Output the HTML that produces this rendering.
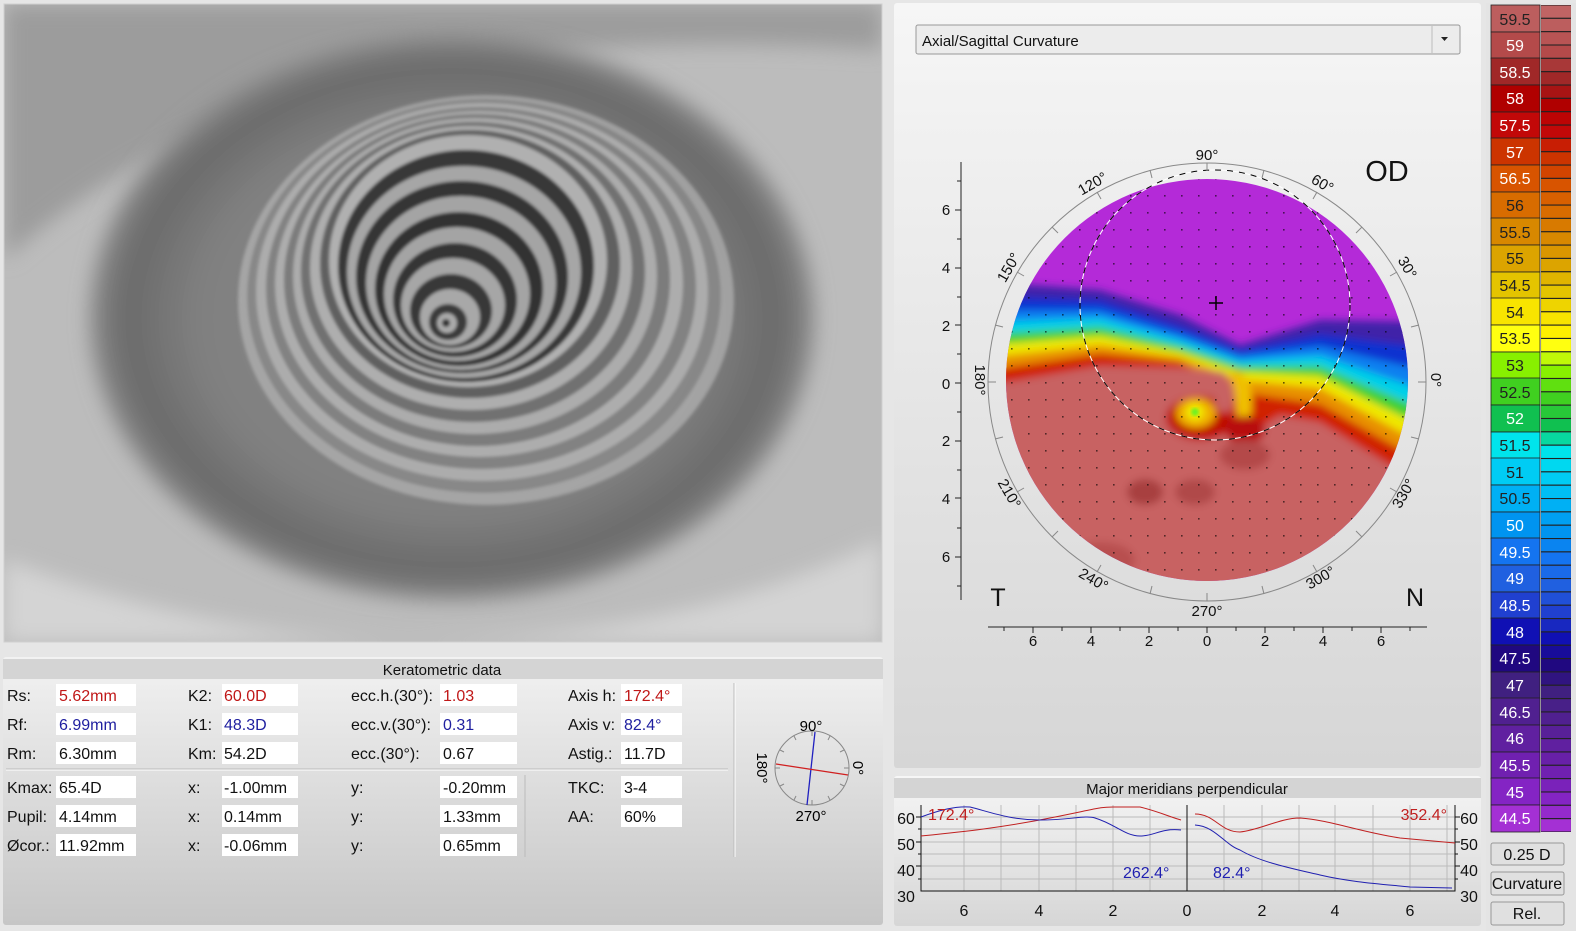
<!DOCTYPE html>
<html><head><meta charset="utf-8"><style>
html,body{margin:0;padding:0;background:#e4e4e4;width:1576px;height:931px;overflow:hidden}
svg{display:block;font-family:"Liberation Sans",sans-serif}
</style></head><body>
<svg width="1576" height="931" viewBox="0 0 1576 931" xmlns="http://www.w3.org/2000/svg">
<defs>
<linearGradient id="pg" x1="0" y1="0" x2="0" y2="1"><stop offset="0" stop-color="#f6f6f6"/><stop offset="1" stop-color="#d6d6d6"/></linearGradient>
<linearGradient id="dg" x1="0" y1="0" x2="0" y2="1"><stop offset="0" stop-color="#f2f2f2"/><stop offset="1" stop-color="#c6c6c6"/></linearGradient>
<radialGradient id="eyebg" cx="0.5" cy="0.5" r="0.5"><stop offset="0" stop-color="#8a8a8a"/><stop offset="0.7" stop-color="#808080"/><stop offset="0.9" stop-color="#6a6a6a"/><stop offset="1" stop-color="#8a8a8a"/></radialGradient>
<clipPath id="eyec"><rect x="4" y="4" width="878" height="638"/></clipPath>
<clipPath id="mapc"><circle cx="1207" cy="380" r="201"/></clipPath>
<filter id="bl" x="-10%" y="-10%" width="120%" height="120%"><feGaussianBlur stdDeviation="4"/></filter>
<filter id="bl2" x="-20%" y="-20%" width="140%" height="140%"><feGaussianBlur stdDeviation="10"/></filter>
<filter id="bl3"><feGaussianBlur stdDeviation="1.5"/></filter>
<pattern id="dots" x="0" y="0" width="17" height="17" patternUnits="userSpaceOnUse"><rect x="8" y="8" width="1.6" height="1.6" fill="#000"/></pattern>
</defs>
<rect width="1576" height="931" fill="#e6e6e6"/>

<!-- EYE -->
<g clip-path="url(#eyec)">
<rect x="4" y="4" width="878" height="638" fill="#bcbcbc"/>
<path d="M4 4 H882 V50 Q600 30 350 80 Q150 130 4 260 Z" fill="#9c9c9c" filter="url(#bl2)"/>
<path d="M4 560 Q250 650 450 640 Q700 630 882 540 V642 H4Z" fill="#d4d4d4" filter="url(#bl2)"/>
<ellipse cx="452" cy="318" rx="362" ry="282" fill="url(#eyebg)" filter="url(#bl2)"/>
<g filter="url(#bl3)">
<ellipse cx="486" cy="300" rx="248" ry="205" fill="#c2c2c2" opacity="0.55"/>
<ellipse cx="484" cy="296" rx="237" ry="197" fill="#7a7a7a" opacity="0.7"/>
<ellipse cx="482" cy="292" rx="226" ry="189" fill="#c4c4c4" opacity="0.6"/>
<ellipse cx="481" cy="288" rx="215" ry="181" fill="#747474" opacity="0.75"/>
<ellipse cx="479" cy="284" rx="204" ry="173" fill="#c4c4c4" opacity="0.65"/>
<ellipse cx="477" cy="280" rx="193" ry="166" fill="#6e6e6e" opacity="0.8"/>
<ellipse cx="475" cy="276" rx="182" ry="158" fill="#c2c2c2" opacity="0.7"/>
<ellipse cx="473" cy="272" rx="172" ry="150" fill="#666" opacity="0.85"/>
<ellipse cx="471" cy="268" rx="161" ry="142" fill="#bebebe" opacity="0.8"/>
<ellipse cx="470" cy="264" rx="150" ry="134" fill="#585858" opacity="0.9"/>
<ellipse cx="468" cy="261" rx="139" ry="126" fill="#b0b0b0"/>
<ellipse cx="466" cy="266" rx="128" ry="116" fill="#383838"/>
<ellipse cx="464" cy="272" rx="117" ry="106" fill="#a6a6a6"/>
<ellipse cx="462" cy="277" rx="106" ry="96" fill="#353535"/>
<ellipse cx="461" cy="283" rx="95" ry="87" fill="#a4a4a4"/>
<ellipse cx="459" cy="289" rx="84" ry="77" fill="#333"/>
<ellipse cx="457" cy="294" rx="73" ry="67" fill="#a4a4a4"/>
<ellipse cx="455" cy="300" rx="62" ry="57" fill="#353535"/>
<ellipse cx="453" cy="305" rx="52" ry="47" fill="#a6a6a6"/>
<ellipse cx="451" cy="311" rx="41" ry="37" fill="#383838"/>
<ellipse cx="450" cy="317" rx="30" ry="28" fill="#a8a8a8"/>
<ellipse cx="448" cy="322" rx="19" ry="18" fill="#3a3a3a"/>
<ellipse cx="447" cy="323" rx="10" ry="10" fill="#aaa"/>
<ellipse cx="446" cy="323" rx="4" ry="4" fill="#333"/>
</g>
</g>
<rect x="4" y="4" width="878" height="638" fill="none" stroke="#d0d0d0"/>

<!-- KERATOMETRIC PANEL -->
<rect x="3" y="657" width="880" height="268" fill="url(#dg)" rx="3"/>
<rect x="3" y="659" width="880" height="20" fill="#d4d4d4"/>
<text x="442" y="675" font-size="15" text-anchor="middle" fill="#111">Keratometric data</text>
<g font-size="16" fill="#111">
<g fill="#fff">
<rect x="56" y="684" width="80" height="22"/><rect x="56" y="713" width="80" height="22"/><rect x="56" y="742" width="80" height="22"/>
<rect x="56" y="776" width="80" height="22"/><rect x="56" y="805" width="80" height="22"/><rect x="56" y="834" width="80" height="22"/>
<rect x="222" y="684" width="76" height="22"/><rect x="222" y="713" width="76" height="22"/><rect x="222" y="742" width="76" height="22"/>
<rect x="222" y="776" width="76" height="22"/><rect x="222" y="805" width="76" height="22"/><rect x="222" y="834" width="76" height="22"/>
<rect x="440" y="684" width="77" height="22"/><rect x="440" y="713" width="77" height="22"/><rect x="440" y="742" width="77" height="22"/>
<rect x="440" y="776" width="77" height="22"/><rect x="440" y="805" width="77" height="22"/><rect x="440" y="834" width="77" height="22"/>
<rect x="621" y="684" width="61" height="22"/><rect x="621" y="713" width="61" height="22"/><rect x="621" y="742" width="61" height="22"/>
<rect x="621" y="776" width="61" height="22"/><rect x="621" y="805" width="61" height="22"/>
</g>
<text x="7" y="701">Rs:</text><text x="59" y="701" fill="#c01818">5.62mm</text>
<text x="7" y="730">Rf:</text><text x="59" y="730" fill="#2020a0">6.99mm</text>
<text x="7" y="759">Rm:</text><text x="59" y="759">6.30mm</text>
<text x="7" y="793">Kmax:</text><text x="59" y="793">65.4D</text>
<text x="7" y="822">Pupil:</text><text x="59" y="822">4.14mm</text>
<text x="7" y="851">Øcor.:</text><text x="59" y="851">11.92mm</text>
<text x="188" y="701">K2:</text><text x="224" y="701" fill="#c01818">60.0D</text>
<text x="188" y="730">K1:</text><text x="224" y="730" fill="#2020a0">48.3D</text>
<text x="188" y="759">Km:</text><text x="224" y="759">54.2D</text>
<text x="188" y="793">x:</text><text x="224" y="793">-1.00mm</text>
<text x="188" y="822">x:</text><text x="224" y="822">0.14mm</text>
<text x="188" y="851">x:</text><text x="224" y="851">-0.06mm</text>
<text x="351" y="701">ecc.h.(30°):</text><text x="443" y="701" fill="#c01818">1.03</text>
<text x="351" y="730">ecc.v.(30°):</text><text x="443" y="730" fill="#2020a0">0.31</text>
<text x="351" y="759">ecc.(30°):</text><text x="443" y="759">0.67</text>
<text x="351" y="793">y:</text><text x="443" y="793">-0.20mm</text>
<text x="351" y="822">y:</text><text x="443" y="822">1.33mm</text>
<text x="351" y="851">y:</text><text x="443" y="851">0.65mm</text>
<text x="568" y="701">Axis h:</text><text x="624" y="701" fill="#c01818">172.4°</text>
<text x="568" y="730">Axis v:</text><text x="624" y="730" fill="#2020a0">82.4°</text>
<text x="568" y="759">Astig.:</text><text x="624" y="759">11.7D</text>
<text x="568" y="793">TKC:</text><text x="624" y="793">3-4</text>
<text x="568" y="822">AA:</text><text x="624" y="822">60%</text>
</g>
<line x1="6" y1="769" x2="728" y2="769" stroke="#bbb"/><line x1="6" y1="770" x2="728" y2="770" stroke="#fff"/>
<line x1="525" y1="775" x2="525" y2="857" stroke="#bbb"/>
<line x1="734" y1="683" x2="734" y2="857" stroke="#bbb"/><line x1="735" y1="683" x2="735" y2="857" stroke="#fff"/>
<!-- compass -->
<circle cx="812" cy="768" r="37" fill="none" stroke="#888"/>
<g stroke="#888">
<line x1="812" y1="731" x2="812" y2="736"/><line x1="812" y1="805" x2="812" y2="800"/>
<line x1="775" y1="768" x2="780" y2="768"/><line x1="849" y1="768" x2="844" y2="768"/>
<line x1="830" y1="736" x2="828" y2="740"/><line x1="844" y1="750" x2="840" y2="752"/>
<line x1="794" y1="736" x2="796" y2="740"/><line x1="780" y1="750" x2="784" y2="752"/>
<line x1="830" y1="800" x2="828" y2="796"/><line x1="844" y1="786" x2="840" y2="784"/>
<line x1="794" y1="800" x2="796" y2="796"/><line x1="780" y1="786" x2="784" y2="784"/>
</g>
<line x1="815" y1="732" x2="807" y2="805" stroke="#2020c0" stroke-width="1.3"/>
<line x1="776" y1="764" x2="848" y2="775" stroke="#d02020" stroke-width="1.3"/>
<text x="811" y="731" font-size="15" text-anchor="middle">90°</text>
<text x="811" y="821" font-size="15" text-anchor="middle">270°</text>
<text transform="translate(757,768) rotate(90)" font-size="15" text-anchor="middle">180°</text>
<text transform="translate(853,768) rotate(90)" font-size="15" text-anchor="middle">0°</text>

<!-- MAP PANEL -->
<rect x="894" y="3" width="587" height="765" fill="url(#pg)" rx="3"/>
<rect x="916" y="25" width="544" height="29" fill="#ececec" stroke="#999" rx="2"/>
<line x1="1432" y1="26" x2="1432" y2="53" stroke="#bbb"/>
<path d="M1441 37 h7 l-3.5 4z" fill="#222"/>
<text x="922" y="46" font-size="15" fill="#111">Axial/Sagittal Curvature</text>

<!-- map -->
<g clip-path="url(#mapc)">
<rect x="990" y="170" width="440" height="420" fill="#b42ad8"/>
<g filter="url(#bl)">
<path d="M990 282 L1100 290 L1180 315 L1240 345 L1320 320 L1430 322 V600 H990Z" fill="#4020a8"/>
<path d="M990 296 L1100 300 L1180 326 L1240 350 L1320 334 L1430 348 V600 H990Z" fill="#1030d0"/>
<path d="M990 310 L1100 310 L1180 334 L1240 356 L1320 346 L1430 372 V600 H990Z" fill="#1080f0"/>
<path d="M990 322 L1100 318 L1180 340 L1240 361 L1320 356 L1430 392 V600 H990Z" fill="#00d0e8"/>
<path d="M990 334 L1100 327 L1180 346 L1240 366 L1320 366 L1430 412 V600 H990Z" fill="#40d030"/>
<path d="M990 345 L1100 336 L1180 352 L1240 372 L1320 376 L1430 430 V600 H990Z" fill="#f0e800"/>
<path d="M990 357 L1100 345 L1180 357 L1240 380 L1320 388 L1430 448 V600 H990Z" fill="#e89000"/>
<path d="M990 370 L1100 354 L1180 362 L1240 392 L1320 404 L1430 466 V600 H990Z" fill="#d02000"/>
<path d="M990 385 L1100 366 L1180 368 L1225 372 L1240 440 L1280 415 L1320 422 L1430 490 V600 H990Z" fill="#c86262"/>
<path d="M1232 370 Q1250 370 1252 400 L1250 440 L1240 440Z" fill="#f0c000"/>
<ellipse cx="1200" cy="418" rx="34" ry="22" fill="#c01000"/>
<ellipse cx="1196" cy="413" rx="20" ry="15" fill="#f0b000"/>
<ellipse cx="1195" cy="412" rx="9" ry="8" fill="#f0f000"/>
<ellipse cx="1224" cy="395" rx="10" ry="18" fill="#c86262"/>
<ellipse cx="1245" cy="430" rx="20" ry="14" fill="#b81010"/>
<ellipse cx="1145" cy="492" rx="18" ry="13" fill="#a84040"/>
<ellipse cx="1195" cy="492" rx="20" ry="13" fill="#b04848"/>
<ellipse cx="1245" cy="455" rx="25" ry="15" fill="#b44848"/>
<ellipse cx="1100" cy="560" rx="35" ry="18" fill="#b85050"/>
</g>
<ellipse cx="1195" cy="412" rx="4" ry="4" fill="#70f020" filter="url(#bl3)"/>
<rect x="990" y="170" width="440" height="420" fill="url(#dots)" opacity="0.6"/>
</g>
<circle cx="1215" cy="305" r="135" fill="none" stroke="#fff" stroke-width="1"/>
<circle cx="1215" cy="305" r="135" fill="none" stroke="#000" stroke-width="1" stroke-dasharray="6 6"/>
<path d="M1209 303 h14 M1216 296 v14" stroke="#000" stroke-width="1.5"/>
<!-- ring -->
<circle cx="1207" cy="382" r="219" fill="none" stroke="#888"/>
<g stroke="#888">
<line x1="1207" y1="163" x2="1207" y2="171"/><line x1="1207" y1="601" x2="1207" y2="593"/>
<line x1="988" y1="382" x2="996" y2="382"/><line x1="1426" y1="382" x2="1418" y2="382"/>
<line x1="1317" y1="192" x2="1313" y2="199"/><line x1="1097" y1="192" x2="1101" y2="199"/>
<line x1="1397" y1="272" x2="1390" y2="276"/><line x1="1017" y1="272" x2="1024" y2="276"/>
<line x1="1397" y1="492" x2="1390" y2="488"/><line x1="1017" y1="492" x2="1024" y2="488"/>
<line x1="1317" y1="572" x2="1313" y2="565"/><line x1="1097" y1="572" x2="1101" y2="565"/>
<line x1="1264" y1="170" x2="1262" y2="178"/><line x1="1150" y1="170" x2="1152" y2="178"/>
<line x1="1362" y1="227" x2="1356" y2="233"/><line x1="1052" y1="227" x2="1058" y2="233"/>
<line x1="1419" y1="325" x2="1411" y2="327"/><line x1="995" y1="325" x2="1003" y2="327"/>
<line x1="1419" y1="439" x2="1411" y2="437"/><line x1="995" y1="439" x2="1003" y2="437"/>
<line x1="1362" y1="537" x2="1356" y2="531"/><line x1="1052" y1="537" x2="1058" y2="531"/>
<line x1="1264" y1="594" x2="1262" y2="586"/><line x1="1150" y1="594" x2="1152" y2="586"/>
</g>
<g font-size="15" fill="#111" text-anchor="middle">
<text x="1207" y="160">90°</text>
<text transform="translate(1320,188) rotate(30)">60°</text>
<text transform="translate(1403,270) rotate(60)">30°</text>
<text transform="translate(1431,380) rotate(90)">0°</text>
<text transform="translate(1408,496) rotate(-60)">330°</text>
<text transform="translate(1323,582) rotate(-30)">300°</text>
<text x="1207" y="616">270°</text>
<text transform="translate(1091,584) rotate(30)">240°</text>
<text transform="translate(1005,496) rotate(60)">210°</text>
<text transform="translate(975,380) rotate(90)">180°</text>
<text transform="translate(1013,270) rotate(-60)">150°</text>
<text transform="translate(1095,188) rotate(-30)">120°</text>
</g>
<text x="1387" y="181" font-size="29" text-anchor="middle" fill="#111">OD</text>
<text x="998" y="606" font-size="25" text-anchor="middle" fill="#111">T</text>
<text x="1415" y="606" font-size="25" text-anchor="middle" fill="#111">N</text>
<g stroke="#222">
<line x1="961" y1="162" x2="961" y2="600"/>
<line x1="988" y1="627" x2="1427" y2="627"/>
<path d="M955 210h6M955 268h6M955 325h6M955 383h6M955 441h6M955 498h6M955 557h6M957 181h4M957 239h4M957 297h4M957 354h4M957 412h4M957 470h4M957 528h4M957 586h4"/>
<path d="M1033 627v6M1091 627v6M1149 627v6M1207 627v6M1265 627v6M1323 627v6M1381 627v6M1004 627v4M1062 627v4M1120 627v4M1178 627v4M1236 627v4M1294 627v4M1352 627v4M1410 627v4"/>
</g>
<g font-size="15" fill="#111" text-anchor="middle">
<text x="946" y="215">6</text><text x="946" y="273">4</text><text x="946" y="331">2</text><text x="946" y="389">0</text><text x="946" y="446">2</text><text x="946" y="504">4</text><text x="946" y="562">6</text>
<text x="1033" y="646">6</text><text x="1091" y="646">4</text><text x="1149" y="646">2</text><text x="1207" y="646">0</text><text x="1265" y="646">2</text><text x="1323" y="646">4</text><text x="1381" y="646">6</text>
</g>

<!-- GRAPH PANEL -->
<rect x="894" y="776" width="587" height="150" fill="url(#pg)" rx="3"/>
<rect x="894" y="778" width="587" height="20" fill="#d4d4d4"/>
<text x="1187" y="794" font-size="15" text-anchor="middle" fill="#111">Major meridians perpendicular</text>
<g stroke="#bbb" stroke-width="1">
<path d="M921 817H1455M921 842H1455M921 866H1455M921 829H1455M921 854H1455M921 879H1455"/>
<path d="M964 805V891M1001 805V891M1039 805V891M1076 805V891M1113 805V891M1150 805V891M1224 805V891M1262 805V891M1299 805V891M1335 805V891M1373 805V891M1410 805V891M1447 805V891"/>
</g>
<g stroke="#111" fill="none">
<path d="M921 805V891H1455V805"/><line x1="1187" y1="805" x2="1187" y2="891"/>
<path d="M916 817h5M916 842h5M916 866h5M918 829h3M918 854h3M918 879h3M1455 817h5M1455 842h5M1455 866h5M1455 829h3M1455 854h3M1455 879h3"/>
</g>
<path d="M921 836 C960 832 1000 828 1050 818 S1100 807 1113 807 L1140 807 C1160 812 1170 817 1181 820" stroke="#c02020" fill="none"/>
<path d="M921 817 C940 810 955 806 970 807 C990 812 1010 820 1040 820 S1085 815 1095 818 C1115 824 1125 836 1140 836 C1155 836 1160 828 1181 830" stroke="#2020b0" fill="none"/>
<path d="M1195 814 C1215 814 1220 832 1240 832 C1260 830 1280 818 1300 818 C1330 820 1360 832 1400 838 L1455 843" stroke="#c02020" fill="none"/>
<path d="M1195 825 C1215 826 1225 845 1240 850 C1260 862 1290 868 1320 875 C1350 882 1380 884 1410 887 L1452 888" stroke="#2020b0" fill="none"/>
<g font-size="16" text-anchor="middle" fill="#111">
<text x="906" y="824">60</text><text x="906" y="850">50</text><text x="906" y="876">40</text><text x="906" y="902">30</text>
<text x="1469" y="824">60</text><text x="1469" y="850">50</text><text x="1469" y="876">40</text><text x="1469" y="902">30</text>
<text x="964" y="916">6</text><text x="1039" y="916">4</text><text x="1113" y="916">2</text><text x="1187" y="916">0</text><text x="1262" y="916">2</text><text x="1335" y="916">4</text><text x="1410" y="916">6</text>
</g>
<g font-size="16">
<text x="928" y="820" fill="#c02020">172.4°</text>
<text x="1447" y="820" fill="#c02020" text-anchor="end">352.4°</text>
<text x="1123" y="878" fill="#2020b0">262.4°</text>
<text x="1213" y="878" fill="#2020b0">82.4°</text>
</g>

<!-- COLOR SCALE -->
<rect x="1486" y="3" width="90" height="928" fill="#e4e4e4"/>
<g stroke="#222" stroke-width="0.8" font-size="16" text-anchor="middle">
<rect x="1491" y="5" width="49" height="27" fill="#bc5e5e"/><text x="1515" y="25" fill="#222" stroke="none">59.5</text>
<rect x="1491" y="32" width="49" height="27" fill="#b44a4a"/><text x="1515" y="51" fill="#fff" stroke="none">59</text>
<rect x="1491" y="58" width="49" height="27" fill="#a02828"/><text x="1515" y="78" fill="#fff" stroke="none">58.5</text>
<rect x="1491" y="85" width="49" height="27" fill="#b00000"/><text x="1515" y="104" fill="#fff" stroke="none">58</text>
<rect x="1491" y="112" width="49" height="27" fill="#c20808"/><text x="1515" y="131" fill="#fff" stroke="none">57.5</text>
<rect x="1491" y="138" width="49" height="27" fill="#cc3400"/><text x="1515" y="158" fill="#fff" stroke="none">57</text>
<rect x="1491" y="165" width="49" height="27" fill="#d85400"/><text x="1515" y="184" fill="#fff" stroke="none">56.5</text>
<rect x="1491" y="192" width="49" height="27" fill="#d86c00"/><text x="1515" y="211" fill="#222" stroke="none">56</text>
<rect x="1491" y="218" width="49" height="27" fill="#d88800"/><text x="1515" y="238" fill="#222" stroke="none">55.5</text>
<rect x="1491" y="245" width="49" height="27" fill="#dca400"/><text x="1515" y="264" fill="#222" stroke="none">55</text>
<rect x="1491" y="272" width="49" height="27" fill="#e4c400"/><text x="1515" y="291" fill="#222" stroke="none">54.5</text>
<rect x="1491" y="298" width="49" height="27" fill="#f8e400"/><text x="1515" y="318" fill="#222" stroke="none">54</text>
<rect x="1491" y="325" width="49" height="27" fill="#ffff10"/><text x="1515" y="344" fill="#222" stroke="none">53.5</text>
<rect x="1491" y="352" width="49" height="27" fill="#88f000"/><text x="1515" y="371" fill="#222" stroke="none">53</text>
<rect x="1491" y="378" width="49" height="27" fill="#40d020"/><text x="1515" y="398" fill="#222" stroke="none">52.5</text>
<rect x="1491" y="405" width="49" height="27" fill="#10c050"/><text x="1515" y="424" fill="#fff" stroke="none">52</text>
<rect x="1491" y="432" width="49" height="27" fill="#00e4ec"/><text x="1515" y="451" fill="#222" stroke="none">51.5</text>
<rect x="1491" y="458" width="49" height="27" fill="#00ccf4"/><text x="1515" y="478" fill="#222" stroke="none">51</text>
<rect x="1491" y="485" width="49" height="27" fill="#00b0f4"/><text x="1515" y="504" fill="#222" stroke="none">50.5</text>
<rect x="1491" y="512" width="49" height="27" fill="#0094f0"/><text x="1515" y="531" fill="#fff" stroke="none">50</text>
<rect x="1491" y="538" width="49" height="27" fill="#1474f0"/><text x="1515" y="558" fill="#fff" stroke="none">49.5</text>
<rect x="1491" y="565" width="49" height="27" fill="#2060e0"/><text x="1515" y="584" fill="#fff" stroke="none">49</text>
<rect x="1491" y="592" width="49" height="27" fill="#2040d0"/><text x="1515" y="611" fill="#fff" stroke="none">48.5</text>
<rect x="1491" y="618" width="49" height="27" fill="#1010b4"/><text x="1515" y="638" fill="#fff" stroke="none">48</text>
<rect x="1491" y="645" width="49" height="27" fill="#200880"/><text x="1515" y="664" fill="#fff" stroke="none">47.5</text>
<rect x="1491" y="672" width="49" height="27" fill="#402080"/><text x="1515" y="691" fill="#fff" stroke="none">47</text>
<rect x="1491" y="698" width="49" height="27" fill="#502090"/><text x="1515" y="718" fill="#fff" stroke="none">46.5</text>
<rect x="1491" y="725" width="49" height="27" fill="#6020a0"/><text x="1515" y="744" fill="#fff" stroke="none">46</text>
<rect x="1491" y="752" width="49" height="27" fill="#7020b0"/><text x="1515" y="771" fill="#fff" stroke="none">45.5</text>
<rect x="1491" y="778" width="49" height="27" fill="#8424c4"/><text x="1515" y="798" fill="#fff" stroke="none">45</text>
<rect x="1491" y="805" width="49" height="27" fill="#a430d4"/><text x="1515" y="824" fill="#fff" stroke="none">44.5</text>
</g>
<svg x="1541" y="5" width="30" height="827" viewBox="0 0 30 62" preserveAspectRatio="none">
<g stroke="#222" stroke-width="0.08">
<rect y="0" width="30" height="1" fill="#c06464"/><rect y="1" width="30" height="1" fill="#bc5e5e"/><rect y="2" width="30" height="1" fill="#b85454"/><rect y="3" width="30" height="1" fill="#b44a4a"/>
<rect y="4" width="30" height="1" fill="#a83838"/><rect y="5" width="30" height="1" fill="#a02828"/><rect y="6" width="30" height="1" fill="#a81414"/><rect y="7" width="30" height="1" fill="#b00000"/>
<rect y="8" width="30" height="1" fill="#bc0404"/><rect y="9" width="30" height="1" fill="#c20808"/><rect y="10" width="30" height="1" fill="#c81e04"/><rect y="11" width="30" height="1" fill="#cc3400"/>
<rect y="12" width="30" height="1" fill="#d24400"/><rect y="13" width="30" height="1" fill="#d85400"/><rect y="14" width="30" height="1" fill="#d86000"/><rect y="15" width="30" height="1" fill="#d86c00"/>
<rect y="16" width="30" height="1" fill="#d87a00"/><rect y="17" width="30" height="1" fill="#d88800"/><rect y="18" width="30" height="1" fill="#da9600"/><rect y="19" width="30" height="1" fill="#dca400"/>
<rect y="20" width="30" height="1" fill="#e0b400"/><rect y="21" width="30" height="1" fill="#e4c400"/><rect y="22" width="30" height="1" fill="#eed400"/><rect y="23" width="30" height="1" fill="#f8e400"/>
<rect y="24" width="30" height="1" fill="#fff000"/><rect y="25" width="30" height="1" fill="#ffff10"/><rect y="26" width="30" height="1" fill="#c0f808"/><rect y="27" width="30" height="1" fill="#88f000"/>
<rect y="28" width="30" height="1" fill="#60e010"/><rect y="29" width="30" height="1" fill="#40d020"/><rect y="30" width="30" height="1" fill="#28c838"/><rect y="31" width="30" height="1" fill="#10c050"/>
<rect y="32" width="30" height="1" fill="#08d8a0"/><rect y="33" width="30" height="1" fill="#00e4ec"/><rect y="34" width="30" height="1" fill="#00d8f0"/><rect y="35" width="30" height="1" fill="#00ccf4"/>
<rect y="36" width="30" height="1" fill="#00bef4"/><rect y="37" width="30" height="1" fill="#00b0f4"/><rect y="38" width="30" height="1" fill="#00a0f2"/><rect y="39" width="30" height="1" fill="#0094f0"/>
<rect y="40" width="30" height="1" fill="#0a84f0"/><rect y="41" width="30" height="1" fill="#1474f0"/><rect y="42" width="30" height="1" fill="#1a6ae8"/><rect y="43" width="30" height="1" fill="#2060e0"/>
<rect y="44" width="30" height="1" fill="#2050d8"/><rect y="45" width="30" height="1" fill="#2040d0"/><rect y="46" width="30" height="1" fill="#1828c0"/><rect y="47" width="30" height="1" fill="#1010b4"/>
<rect y="48" width="30" height="1" fill="#180c9a"/><rect y="49" width="30" height="1" fill="#200880"/><rect y="50" width="30" height="1" fill="#301480"/><rect y="51" width="30" height="1" fill="#402080"/>
<rect y="52" width="30" height="1" fill="#482088"/><rect y="53" width="30" height="1" fill="#502090"/><rect y="54" width="30" height="1" fill="#582098"/><rect y="55" width="30" height="1" fill="#6020a0"/>
<rect y="56" width="30" height="1" fill="#6820a8"/><rect y="57" width="30" height="1" fill="#7020b0"/><rect y="58" width="30" height="1" fill="#7a22ba"/><rect y="59" width="30" height="1" fill="#8424c4"/>
<rect y="60" width="30" height="1" fill="#942acc"/><rect y="61" width="30" height="1" fill="#a430d4"/>
</g>
</svg>
<g font-size="16" text-anchor="middle" fill="#111">
<rect x="1491" y="843" width="73" height="22" fill="#e0e0e0" stroke="#999" rx="2"/><text x="1527" y="860">0.25 D</text>
<rect x="1491" y="872" width="73" height="23" fill="#e0e0e0" stroke="#999" rx="2"/><text x="1527" y="889">Curvature</text>
<rect x="1491" y="902" width="73" height="23" fill="#e0e0e0" stroke="#999" rx="2"/><text x="1527" y="919">Rel.</text>
</g>
</svg>
</body></html>
